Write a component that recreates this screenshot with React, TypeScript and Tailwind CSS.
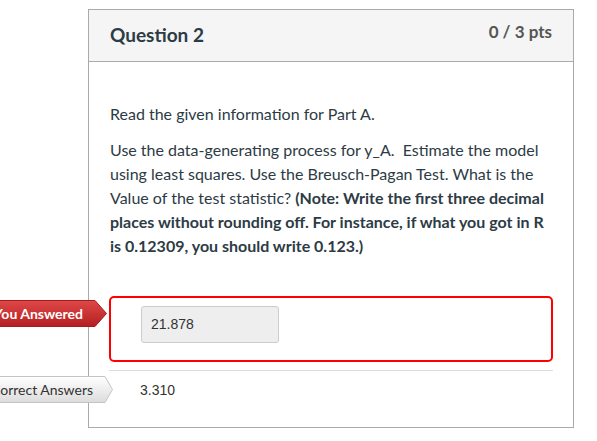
import React from "react";

function Badge({
  left,
  top,
  width,
  rectEnd,
  kind,
  children,
}: {
  left: number;
  top: number;
  width: number;
  rectEnd: number;
  kind: "red" | "gray";
  children: React.ReactNode;
}) {
  const h = 27;
  const id = kind === "red" ? "gRed" : "gGray";
  return (
    <div
      className="absolute flex items-center justify-end"
      style={{ left, top, width, height: h, paddingRight: width - rectEnd + 12 }}
    >
      <svg className="absolute inset-0" width={width} height={h} viewBox={`0 0 ${width} ${h}`}>
        <defs>
          {kind === "red" ? (
            <linearGradient id={id} x1="0" y1="0" x2="0" y2="1">
              <stop offset="0" stopColor="#e04848" />
              <stop offset="1" stopColor="#b3201f" />
            </linearGradient>
          ) : (
            <linearGradient id={id} x1="0" y1="0" x2="0" y2="1">
              <stop offset="0" stopColor="#ffffff" />
              <stop offset="1" stopColor="#dcdcdc" />
            </linearGradient>
          )}
        </defs>
        <polygon
          points={`0,0.5 ${rectEnd},0.5 ${width - 0.5},${h / 2} ${rectEnd},${h - 0.5} 0,${h - 0.5}`}
          fill={`url(#${id})`}
          stroke={kind === "red" ? "#a51c1c" : "#c4c4c4"}
          strokeWidth="1"
        />
      </svg>
      <span
        className={
          kind === "red"
            ? "relative text-[14px] font-bold text-white whitespace-nowrap"
            : "relative text-[14px] font-normal text-[#333] whitespace-nowrap"
        }
        style={{ fontFamily: "Lato, sans-serif" }}
      >
        {children}
      </span>
    </div>
  );
}

export default function App() {
  return (
    <div
      className="relative w-[597px] h-[441px] bg-white overflow-hidden pl-[88px] pt-[9px]"
      style={{ fontFamily: "Lato, 'Noto Sans', sans-serif" }}
    >
      <div className="w-[486px] h-[419px] border border-[#aaaaaa] bg-white flex flex-col">
        <div className="h-[52px] bg-[#f5f5f5] border-b border-[#aaaaaa] flex justify-between pl-[21px] pr-[21px]">
          <div className="text-[19px] font-bold text-[#2d3b45] pt-[13px] leading-[24px]">Question 2</div>
          <div className="text-[17px] font-bold text-[#555] pt-[11px] leading-[22px]">0 / 3 pts</div>
        </div>
        <div className="flex flex-col px-[20px] pt-[40px] text-[#2d3b45]">
          <p className="pl-px text-[16px] leading-[24px]">Read the given information for Part A.</p>
          <p className="pl-px mt-[12px] text-[16px] leading-[24px] whitespace-pre-wrap">
            {"Use the data-generating process for y_A.  Estimate the model using least squares. Use the Breusch-Pagan Test. What is the Value of the test statistic? "}
            <strong className="font-bold">
              (Note: Write the first three decimal places without rounding off. For instance, if what you got in R is 0.12309, you should write 0.123.)
            </strong>
          </p>
          <div className="mt-[38px] h-[66px] border-2 border-[#ff0000] rounded-[5px] pl-[30px] pt-[8px]">
            <div
              className="w-[138px] h-[37px] bg-[#eeeeee] border border-[#cccccc] rounded-[3px] flex items-center pl-[9px] text-[14px] text-[#333]"
              style={{ fontFamily: "'Liberation Sans', Arial, sans-serif" }}
            >
              21.878
            </div>
          </div>
          <div className="mt-[8px] border-t border-[#dddddd] h-[40px] flex items-center pl-[31px] text-[14px] text-[#333]" style={{ fontFamily: "'Liberation Sans', Arial, sans-serif" }}>
            3.310
          </div>
        </div>
      </div>
      <Badge left={-12} top={300} width={119} rectEnd={107} kind="red">
        You Answered
      </Badge>
      <Badge left={-20} top={376} width={133} rectEnd={125} kind="gray">
        Correct Answers
      </Badge>
    </div>
  );
}
